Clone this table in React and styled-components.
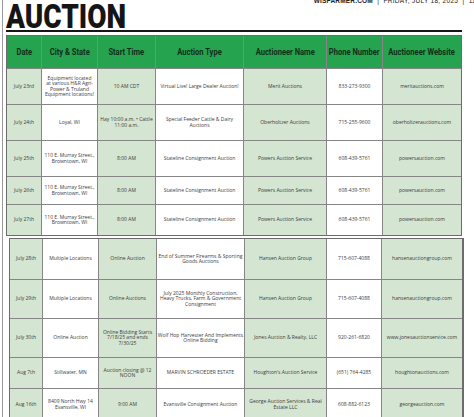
import React from 'react';
import styled, { createGlobalStyle } from 'styled-components';

const GlobalStyle = createGlobalStyle`
  html, body { margin: 0; padding: 0; background: #fff; }
  body { overflow: hidden; }
`;

const Page = styled.div`
  width: 469px;
  height: 417px;
  overflow: hidden;
  margin-left: 2px;
  border-left: 1px solid #9a9a9a;
  padding-left: 3px;
  background: #fff;
  font-family: "Open Sans", "Liberation Sans", sans-serif;
`;

const Masthead = styled.div`
  display: flex;
  justify-content: space-between;
  align-items: flex-start;
  width: 470px;
  height: 30px;
  margin-top: -1.5px;
  margin-bottom: 1.5px;
`;

const Title = styled.h1`
  margin: 0;
  font-family: Roboto, "Liberation Sans", sans-serif;
  font-weight: 900;
  font-size: 34px;
  line-height: 34px;
  color: #151515;
  transform: scaleX(0.82);
  transform-origin: left center;
  white-space: nowrap;
`;

const Dateline = styled.div`
  margin-top: -2px;
  font-family: "Liberation Sans", sans-serif;
  font-size: 6.5px;
  letter-spacing: 0.3px;
  color: #222;
  white-space: nowrap;
  b { font-weight: 700; letter-spacing: 0.2px; }
`;

const Rule = styled.div`
  width: 456px;
  height: 2px;
  background: #161616;
`;

const Grid = styled.div`
  display: grid;
  grid-template-columns: ${p => p.$cols};
  grid-template-rows: ${p => p.$rows};
  gap: 1px;
  background: #868686;
  border: 1px solid #6c6c6c;
  border-right-width: ${p => p.$rightBorder || 1}px;
  width: ${p => p.$width}px;
  box-sizing: border-box;
  margin-top: ${p => p.$top}px;
  margin-left: ${p => p.$left || 0}px;
`;

const HeadCell = styled.div`
  background: #25a34e;
  display: flex;
  align-items: center;
  justify-content: center;
  text-align: center;
  white-space: nowrap;
`;

const HeadText = styled.span`
  display: inline-block;
  font-family: Roboto, "Liberation Sans", sans-serif;
  font-weight: 700;
  font-size: 9px;
  color: #10301a;
  transform: scaleX(0.84);
`;

const Cell = styled.div`
  background: ${p => (p.$shade ? '#d4e5d2' : '#ffffff')};
  display: flex;
  flex-direction: column;
  align-items: center;
  justify-content: center;
  text-align: center;
  overflow: hidden;
  font-family: "Open Sans", "Liberation Sans", sans-serif;
  font-size: 5px;
  line-height: 5.4px;
  color: #3c3c3c;
`;

const Line = styled.span`
  display: block;
  white-space: nowrap;
`;

const headers = ['Date', 'City & State', 'Start Time', 'Auction Type', 'Auctioneer Name', 'Phone Number', 'Auctioneer Website'];

const murray = ['110 E. Murray Street.,', 'Browntown, WI'];

const topRows = [
  ['July 23rd', ['Equipment located', 'at various H&R Agri-', 'Power & Truland', 'Equipment locations!'], '10 AM CDT', 'Virtual Live! Large Dealer Auction!', 'Merit Auctions', '833-273-9300', 'meritauctions.com'],
  ['July 24th', 'Loyal, WI', ['Hay 10:00 a.m. • Cattle', '11:00 a.m.'], ['Special Feeder Cattle & Dairy', 'Auctions'], 'Oberholtzer Auctions', '715-255-9600', 'oberholtzerauctions.com'],
  ['July 25th', murray, '8:00 AM', 'Stateline Consignment Auction', 'Powers Auction Service', '608-439-5761', 'powersauction.com'],
  ['July 26th', murray, '8:00 AM', 'Stateline Consignment Auction', 'Powers Auction Service', '608-439-5761', 'powersauction.com'],
  ['July 27th', murray, '8:00 AM', 'Stateline Consignment Auction', 'Powers Auction Service', '608-439-5761', 'powersauction.com'],
];

const bottomRows = [
  ['July 28th', 'Multiple Locations', 'Online Auction', ['End of Summer Firearms & Sporting', 'Goods Auctions'], 'Hansen Auction Group', '715-607-4088', 'hansenauctiongroup.com'],
  ['July 29th', 'Multiple Locations', 'Online Auctions', ['July 2025 Monthly Construction,', 'Heavy Trucks, Farm & Government', 'Consignment'], 'Hansen Auction Group', '715-607-4088', 'hansenauctiongroup.com'],
  ['July 30th', 'Online Auction', ['Online Bidding Starts', '7/18/25 and ends', '7/30/25'], ['Wolf Hop Harvester And Implements', 'Online Bidding'], 'Jones Auction & Realty, LLC', '920-261-6820', 'www.jonesauctionservice.com'],
  ['Aug 7th', 'Stillwater, MN', ['Auction closing @ 12', 'NOON'], 'MARVIN SCHROEDER ESTATE', "Houghton's Auction Service", '(651) 764-4285', 'houghtonauctions.com'],
  ['Aug 16th', ['8409 North Hwy 14', 'Evansville, WI'], '9:00 AM', 'Evansville Consignment Auction', ['George Auction Services & Real', 'Estate LLC'], '608-882-6123', 'georgeauction.com'],
];

function renderRows(rows, prefix) {
  return rows.flatMap((row, r) =>
    row.map((value, c) => (
      <Cell key={`${prefix}-${r}-${c}`} $shade={c % 2 === 0}>
        {(Array.isArray(value) ? value : [value]).map((t, i) => (
          <Line key={i}>{t}</Line>
        ))}
      </Cell>
    ))
  );
}

export default function App() {
  return (
    <>
      <GlobalStyle />
      <Page>
        <Masthead>
          <Title>AUCTION</Title>
          <Dateline>
            <b>WISFARMER.COM</b> &nbsp;|&nbsp; FRIDAY, JULY 18, 2025 &nbsp;|&nbsp; 11
          </Dateline>
        </Masthead>
        <Rule />
        <Grid
          $width={456}
          $top={3}
          $cols="34px 55px 57px 87px 82px 55px 78px"
          $rows="32px 35px 35px 35px 27px 30px"
        >
          {headers.map(h => (
            <HeadCell key={h}>
              <HeadText>{h}</HeadText>
            </HeadCell>
          ))}
          {renderRows(topRows, 't')}
        </Grid>
        <Grid
          $width={455}
          $top={2}
          $left={3}
          $rightBorder={2}
          $cols="32px 55px 57px 87px 81px 54px 80px"
          $rows="40px 38px 38px 30px 31px"
        >
          {renderRows(bottomRows, 'b')}
        </Grid>
      </Page>
    </>
  );
}
